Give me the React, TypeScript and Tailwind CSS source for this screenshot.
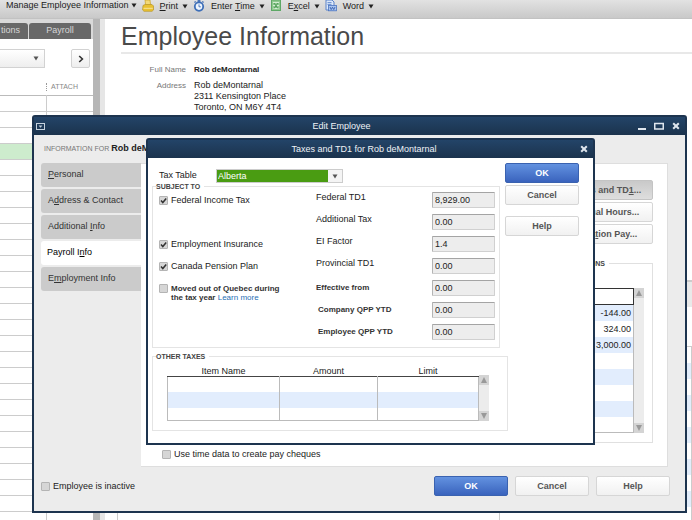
import React from "react";

const FONT = "font-['Liberation_Sans',Arial,sans-serif]";

const U = ({ children }: { children: React.ReactNode }) => (
  <span className="underline">{children}</span>
);

function Check({
  id,
  checked,
  children,
  bold,
}: {
  id: string;
  checked?: boolean;
  children: React.ReactNode;
  bold?: boolean;
}) {
  return (
    <div className="flex items-start gap-[3px]">
      <span className="grid size-[9px] shrink-0">
        <input
          id={id}
          type="checkbox"
          defaultChecked={checked}
          className="peer col-start-1 row-start-1 size-[9px] appearance-none rounded-[1px] border border-[#b4b4b4] bg-[#d6d6d6]"
        />
        <svg
          viewBox="0 0 9 9"
          className="pointer-events-none invisible col-start-1 row-start-1 size-[9px] peer-checked:visible"
        >
          <path d="M2 4.5 L3.8 6.5 L7.2 2.4" fill="none" stroke="#333" strokeWidth="1.5" />
        </svg>
      </span>
      <label
        htmlFor={id}
        className={bold ? "text-[8px] leading-[9px] font-bold text-[#333]" : "text-[9px] leading-[9px]"}
      >
        {children}
      </label>
    </div>
  );
}

function PushButton({
  children,
  primary,
  active,
  wide,
}: {
  children: React.ReactNode;
  primary?: boolean;
  active?: boolean;
  wide?: boolean;
}) {
  const look = primary
    ? "border-[#3a62b0] bg-linear-to-b from-[#6392e0] to-[#3a63bd] text-white"
    : active
      ? "border-[#c4c4c4] bg-linear-to-b from-[#c9c9c9] to-[#dedede] text-[#555]"
      : "border-[#d6d6d6] bg-linear-to-b from-white to-[#f1f1f1] text-[#555]";
  return (
    <button
      type="button"
      className={`h-5 shrink-0 rounded-[2px] border text-[9px] leading-[10px] font-bold ${wide ? "w-[90px] pr-1" : "w-[74px]"} ${look}`}
    >
      {children}
    </button>
  );
}

const Close = () => (
  <svg viewBox="0 0 8 8" className="size-[8px]">
    <path d="M1.2 1.2 L6.8 6.8 M6.8 1.2 L1.2 6.8" stroke="#dfe6ee" strokeWidth="2" />
  </svg>
);

function ScrollBar() {
  return (
    <div className="flex w-[10px] shrink-0 flex-col justify-between bg-[#ececec]">
      <svg viewBox="0 0 10 10" className="size-[10px] bg-[#d4d4d4]">
        <path d="M5 2 L8 8 H2 Z" fill="#999" />
      </svg>
      <svg viewBox="0 0 10 10" className="size-[10px] bg-[#d4d4d4]">
        <path d="M5 8 L8 2 H2 Z" fill="#999" />
      </svg>
    </div>
  );
}

const Caret = ({ soft }: { soft?: boolean }) => (
  <svg viewBox="0 0 6 5" className="h-[5px] w-[6px] shrink-0">
    <path d="M0.5 0.5 H5.5 L3 4.5 Z" fill={soft ? "#555" : "#222"} />
  </svg>
);

const PrinterIcon = () => (
  <svg viewBox="0 0 12 12" className="size-3 shrink-0">
    <path d="M3 0 H8 L8.6 5 H3.6 Z" fill="#f3d978" stroke="#c9a227" strokeWidth=".7" />
    <path d="M1 5.5 L3 4.5 H10 L11.5 6 V10 L10 11.3 H2 L0.6 10 Z" fill="#e8c032" stroke="#b9962a" strokeWidth=".7" />
    <path d="M1.5 8.3 H10.8" stroke="#f7e49a" strokeWidth="1" />
  </svg>
);

const ClockIcon = () => (
  <svg viewBox="0 0 12 12" className="size-3 shrink-0">
    <rect x="4.6" y="0" width="2.8" height="2" fill="#4c76b8" />
    <path d="M1.4 2.6 L2.8 1.4 M10.6 2.6 L9.2 1.4" stroke="#4c76b8" strokeWidth="1.3" />
    <circle cx="6" cy="6.6" r="4.2" fill="#eef5fd" stroke="#3e6fb8" strokeWidth="1.8" />
    <path d="M6 4.4 V6.8 H7.8" fill="none" stroke="#3e6fb8" strokeWidth=".9" />
  </svg>
);

const ExcelIcon = () => (
  <svg viewBox="0 0 12 12" className="size-3 shrink-0">
    <rect x="1.5" y="0" width="9" height="10.5" fill="#8fc98f" stroke="#5ea866" />
    <path d="M3 2.5 H9 M3 5.5 H9 M3 8.5 H9" stroke="#d9efd8" strokeWidth=".9" />
    <path d="M4 3 L8 8.5 M8 3 L4 8.5" stroke="#4f9a59" strokeWidth="1" />
  </svg>
);

const WordIcon = () => (
  <svg viewBox="0 0 12 12" className="size-3 shrink-0">
    <path d="M1 0 H7 L9 2 V10 H1 Z" fill="#dce8fa" stroke="#5a82c8" />
    <path d="M2.5 2.6 H6.5 M2.5 4.4 H6.5" stroke="#5a82c8" strokeWidth=".9" />
    <rect x="3.5" y="5.4" width="8" height="5.4" fill="#a9c4f0" stroke="#4a74c0" strokeWidth=".8" />
    <path d="M5 7 L6.2 9.6 L7.5 7.2 L8.8 9.6 L10 7" fill="none" stroke="#2d55a5" strokeWidth=".8" />
  </svg>
);

function Toolbar() {
  const item = "flex items-center gap-1";
  return (
    <nav className="flex h-[19px] shrink-0 items-start gap-[5px] border-b border-[#c2c2c2] bg-linear-to-b from-[#e2e2e2] to-[#c9c9c9] pl-[6px] text-[9px] leading-[11px] whitespace-nowrap text-[#1c1c1c]">
      <button type="button" className="flex items-center gap-[2px]">
        Manage Employee Information <Caret />
      </button>
      <button type="button" className={item}>
        <PrinterIcon />
        <span className="ml-[2px]"><U>P</U>rint</span>
        <Caret />
      </button>
      <button type="button" className={item}>
        <ClockIcon />
        <span className="ml-[2px]">Enter <U>T</U>ime</span>
        <Caret />
      </button>
      <button type="button" className={item}>
        <ExcelIcon />
        <span className="ml-[2px]">E<U>x</U>cel</span>
        <Caret />
      </button>
      <button type="button" className={item}>
        <WordIcon />
        <span className="ml-[2px]">Word</span>
        <Caret />
      </button>
    </nav>
  );
}

function TransactionsPane() {
  return (
    <aside className="flex w-[93px] shrink-0 flex-col overflow-hidden bg-white">
      <div className="flex h-5 shrink-0 items-end gap-px bg-[#d9d9d9] text-[9px] text-[#d6d6d6]">
        <button type="button" className="h-4 w-7 rounded-tr-[3px] bg-[#686868] pr-2 text-right">tions</button>
        <button type="button" className="h-4 w-[62px] rounded-t-[3px] bg-[#686868]">Payroll</button>
      </div>
      <div className="mt-[10px] flex h-[19px] shrink-0 justify-between pr-[3px]">
        <button
          type="button"
          aria-label="Filter"
          className="flex w-[45px] items-center justify-end border border-l-0 border-[#d2d2d2] bg-linear-to-b from-white to-[#eee] pr-[5px]"
        >
          <Caret soft />
        </button>
        <button
          type="button"
          aria-label="Next"
          className="flex w-[19px] items-center justify-center rounded-[2px] border border-[#d2d2d2] bg-linear-to-b from-white to-[#eee]"
        >
          <svg viewBox="0 0 6 8" className="h-2 w-[6px]">
            <path d="M1.2 1 L4.4 4 L1.2 7" fill="none" stroke="#333" strokeWidth="1.6" />
          </svg>
        </button>
      </div>
      <table className="mt-[12px] w-full table-fixed border-collapse">
        <thead>
          <tr className="h-[15px] border-b border-[#bbb]">
            <th className="w-[46px]" />
            <th className="text-left text-[7px] leading-[8px] font-normal text-[#888]">
              <span className="inline-block border-l border-dotted border-[#999] pl-1">ATTACH</span>
            </th>
          </tr>
        </thead>
        <tbody>
          {Array.from({ length: 27 }, (_, i) => (
            <tr key={i} className={i === 3 ? "h-4 border-b border-[#ccc] bg-[#cdeccd]" : "h-4 border-b border-[#ccc]"}>
              <td className="border-r border-[#ccc]" />
              <td />
            </tr>
          ))}
        </tbody>
      </table>
    </aside>
  );
}

function EmployeeDetails() {
  return (
    <main className="flex min-w-0 flex-1 flex-col bg-white">
      <h1 className="ml-4 h-[35px] shrink-0 border-b-2 border-[#e8e8e8] text-[25px] leading-[35px] text-[#4a4a4a]">
        Employee Information
      </h1>
      <dl className="mt-[10px] grid shrink-0 grid-cols-[81px_1fr] gap-x-2 gap-y-[5px] text-[9px] leading-[11px] text-[#222]">
        <dt className="text-right text-[8px] text-[#777]">Full Name</dt>
        <dd className="text-[8px] font-bold">Rob deMontarnal</dd>
        <dt className="text-right text-[8px] text-[#777]">Address</dt>
        <dd>
          Rob deMontarnal
          <br />
          2311 Kensington Place
          <br />
          Toronto, ON M6Y 4T4
        </dd>
      </dl>
      <section className="mt-[167px] ml-3 flex flex-1 flex-col border-l border-[#ccc]">
        <div className="h-[27px] shrink-0 border-t-2 border-[#ccc] bg-[#e9e9e9]" />
        <div className="h-10 shrink-0 border-b border-[#ccc]" />
        <div className="grid flex-1 grid-cols-[2fr_1fr] divide-x divide-[#ccc] border-r border-[#ccc]">
          <div className="bg-[repeating-linear-gradient(#fff_0_16px,#e2edfb_16px_32px)]" />
          <div className="bg-[repeating-linear-gradient(#fff_0_16px,#e2edfb_16px_32px)]" />
        </div>
      </section>
    </main>
  );
}

const amounts = ["", "-144.00", "324.00", "3,000.00", "", "", "", "", ""];

function EditEmployee() {
  const tab = "h-6 rounded-l-[3px] pl-[7px] text-left text-[9px] text-[#333] ";
  return (
    <section
      aria-label="Edit Employee"
      className="absolute top-[115px] right-[5px] left-[32px] rounded-t-[3px] border-2 border-[#1d344f] bg-[#ececec] text-[#222]"
    >
      <header className="flex h-[18px] items-center bg-linear-to-b from-[#234468] to-[#1b334d] pr-[5px] pl-[2px]">
        <svg viewBox="0 0 9 7" className="h-[7px] w-[9px]">
          <rect x=".5" y=".5" width="8" height="6" fill="none" stroke="#c6d2de" />
          <path d="M2.6 2.6 H6.4 L4.5 4.8 Z" fill="#c6d2de" />
        </svg>
        <h2 className="flex-1 pt-[2px] text-center text-[9px] text-[#eef2f6]">Edit Employee</h2>
        <div className="flex items-center gap-2">
          <svg viewBox="0 0 8 8" className="size-2"><path d="M0 7 H8" stroke="#dfe6ee" strokeWidth="2" /></svg>
          <svg viewBox="0 0 10 8" className="h-2 w-[10px]">
            <rect x=".75" y="1.5" width="8.5" height="5.5" fill="none" stroke="#dfe6ee" strokeWidth="1.5" />
          </svg>
          <Close />
        </div>
      </header>
      <div className="flex h-7 items-center gap-[2px] pl-[10px]">
        <span className="text-[7px] text-[#777]">INFORMATION FOR</span>
        <strong className="text-[9px]">Rob deMontarnal</strong>
      </div>
      <div className="flex pr-[17px] pl-[7px]">
        <nav className="flex w-[100px] shrink-0 flex-col gap-[2px]">
          <button type="button" className={tab + "bg-[#cbcbcb]"}><U>P</U>ersonal</button>
          <button type="button" className={tab + "bg-[#cbcbcb]"}>A<U>d</U>dress &amp; Contact</button>
          <button type="button" className={tab + "bg-[#cbcbcb]"}>Additional <U>I</U>nfo</button>
          <button type="button" className="h-6 rounded-l-[3px] bg-white pl-[6px] text-left text-[9px] text-black">Payroll I<U>n</U>fo</button>
          <button type="button" className={tab + "bg-[#cbcbcb]"}>E<U>m</U>ployment Info</button>
        </nav>
        <div className="flex flex-1 flex-col border border-l-0 border-[#dedede] bg-white pt-4 pr-[14px] pb-[7px] pl-2">
          <div className="flex flex-col items-end gap-[2px]">
            <PushButton wide active>Taxes and TD<U>1</U>...</PushButton>
            <PushButton wide>Annual Hours...</PushButton>
            <PushButton wide>Vaca<U>t</U>ion Pay...</PushButton>
          </div>
          <fieldset className="mt-4 border border-[#e0e0e0] pr-2 pb-[9px]">
            <legend className="mr-[35px] ml-auto px-1 text-[7px] leading-[7px] font-bold text-[#444]">
              COMPANY CONTRIBUTIONS
            </legend>
            <div className="mt-[21px] ml-4 flex">
              <table className="flex-1 table-fixed border-collapse border-r border-b border-[#bbb] text-[9px] leading-[10px]">
                <tbody>
                  {amounts.map((a, i) => (
                    <tr
                      key={i}
                      className={
                        i === 0 ? "h-4 border border-[#333]" : i % 2 ? "h-4 bg-[#e2edfd]" : "h-4"
                      }
                    >
                      <td className="pr-[2px] text-right">{a}</td>
                    </tr>
                  ))}
                </tbody>
              </table>
              <ScrollBar />
            </div>
          </fieldset>
          <div className="mt-[7px] ml-[13px]">
            <Check id="time-data">Use time data to create pay cheques</Check>
          </div>
        </div>
      </div>
      <footer className="flex h-11 items-center gap-[7px] pt-[6px] pr-[15px] pb-3 pl-[7px]">
        <div className="flex-1">
          <Check id="inactive">Employee is inactive</Check>
        </div>
        <PushButton primary>OK</PushButton>
        <PushButton>Cancel</PushButton>
        <PushButton>Help</PushButton>
      </footer>
    </section>
  );
}

const fields: [string, string, string][] = [
  ["federal", "Federal TD1", "8,929.00"],
  ["additional", "Additional Tax", "0.00"],
  ["ei", "EI Factor", "1.4"],
  ["provincial", "Provincial TD1", "0.00"],
  ["effective", "Effective from", "0.00"],
  ["company", "Company QPP YTD", "0.00"],
  ["employee", "Employee QPP YTD", "0.00"],
];

function TaxesDialog() {
  return (
    <section
      aria-label="Taxes and TD1"
      className="absolute top-[138px] left-[146px] w-[449px] rounded-t-[3px] border-2 border-[#1d344f] bg-white text-[#222]"
    >
      <header className="flex h-[18px] items-center bg-linear-to-b from-[#234468] to-[#1b334d] pr-[5px]">
        <h2 className="flex-1 pt-[2px] text-center text-[9px] text-[#eef2f6]">Taxes and TD1 for Rob deMontarnal</h2>
        <Close />
      </header>
      <div className="pb-3 pl-1">
        <div className="flex gap-[5px]">
          <div className="w-[348px] pt-[11px]">
            <div className="flex h-[14px] items-start pl-[7px]">
              <label htmlFor="tax-table" className="w-[57px] text-[9px] leading-[12px]">Tax Table</label>
              <div className="flex h-[14px] w-[127px] border border-[#ccc] bg-[#f4f4f4]">
                <select
                  id="tax-table"
                  className="h-3 flex-1 appearance-none bg-[#4a9c12] px-px text-[9px] leading-[12px] text-white"
                >
                  <option>Alberta</option>
                </select>
                <span className="flex w-[14px] items-center justify-center"><Caret soft /></span>
              </div>
            </div>
            <fieldset className="border border-[#e4e4e4] pr-1 pb-[3px] pl-[6px]">
              <legend className="-ml-[3px] pr-1 text-[7px] leading-[7px] font-bold text-[#444]">SUBJECT TO</legend>
              <div className="flex">
                <div className="grid flex-1 auto-rows-[22px] items-start pt-[6px]">
                  <Check id="fed" checked>Federal Income Tax</Check>
                  <div />
                  <Check id="emp" checked>Employment Insurance</Check>
                  <Check id="cpp" checked>Canada Pension Plan</Check>
                  <Check id="moved" bold>
                    Moved out of Quebec during
                    <br />
                    the tax year{" "}
                    <a href="#learn" className="font-normal text-[#1f6fb5]">Learn more</a>
                  </Check>
                </div>
                <div className="w-[179px]">
                  {fields.map(([id, name, value], i) => (
                    <div key={id} className="flex h-[22px] items-start pt-[2px]">
                      <label
                        htmlFor={id}
                        className={
                          i < 4
                            ? "flex-1 text-[9px] leading-[10px]"
                            : i === 4
                              ? "flex-1 pt-[3px] text-[8px] leading-[10px] font-bold text-[#333]"
                              : "flex-1 pt-[3px] pl-[2px] text-[8px] leading-[10px] font-bold text-[#333]"
                        }
                      >
                        {name}
                      </label>
                      <input
                        id={id}
                        defaultValue={value}
                        className="h-4 w-[63px] rounded-[1px] border border-[#d0d0d0] border-t-[#a4a4a4] border-l-[#b4b4b4] bg-[#ededed] px-[2px] text-[9px]"
                      />
                    </div>
                  ))}
                </div>
              </div>
            </fieldset>
          </div>
          <div className="flex flex-col gap-[2px] pt-[5px]">
            <PushButton primary>OK</PushButton>
            <PushButton>Cancel</PushButton>
            <div className="mt-[5px]"><PushButton>Help</PushButton></div>
          </div>
        </div>
        <fieldset className="mt-[5px] w-[356px] border border-[#e4e4e4] pb-[9px] pl-[14px]">
          <legend className="-ml-[11px] pr-1 text-[7px] leading-[7px] font-bold text-[#444]">OTHER TAXES</legend>
          <div className="flex items-end">
            <table className="w-[312px] table-fixed border-collapse text-[9px] leading-[10px]">
              <thead>
                <tr className="h-4 border-b border-[#444]">
                  <th className="w-[112px] pt-1 align-bottom font-normal">Item Name</th>
                  <th className="w-[98px] pt-1 align-bottom font-normal">Amount</th>
                  <th className="pt-1 align-bottom font-normal">Limit</th>
                </tr>
              </thead>
              <tbody className="border border-t-0 border-[#bbb]">
                {["h-4", "h-4 bg-[#e2edfd]", "h-3"].map((c, i) => (
                  <tr key={i} className={c}>
                    <td className="border-r border-[#bbb]" />
                    <td className="border-r border-[#bbb]" />
                    <td />
                  </tr>
                ))}
              </tbody>
            </table>
            <div className="flex h-[46px]"><ScrollBar /></div>
          </div>
        </fieldset>
      </div>
    </section>
  );
}

export default function App() {
  return (
    <div className={`relative flex h-screen w-full flex-col overflow-hidden bg-white ${FONT}`}>
      <Toolbar />
      <div className="flex min-h-0 flex-1">
        <TransactionsPane />
        <div className="w-[7px] shrink-0 bg-[#b6b6b6]" />
        <div className="w-[5px] shrink-0 bg-[#e6e6e6]" />
        <EmployeeDetails />
      </div>
      <EditEmployee />
      <TaxesDialog />
    </div>
  );
}
